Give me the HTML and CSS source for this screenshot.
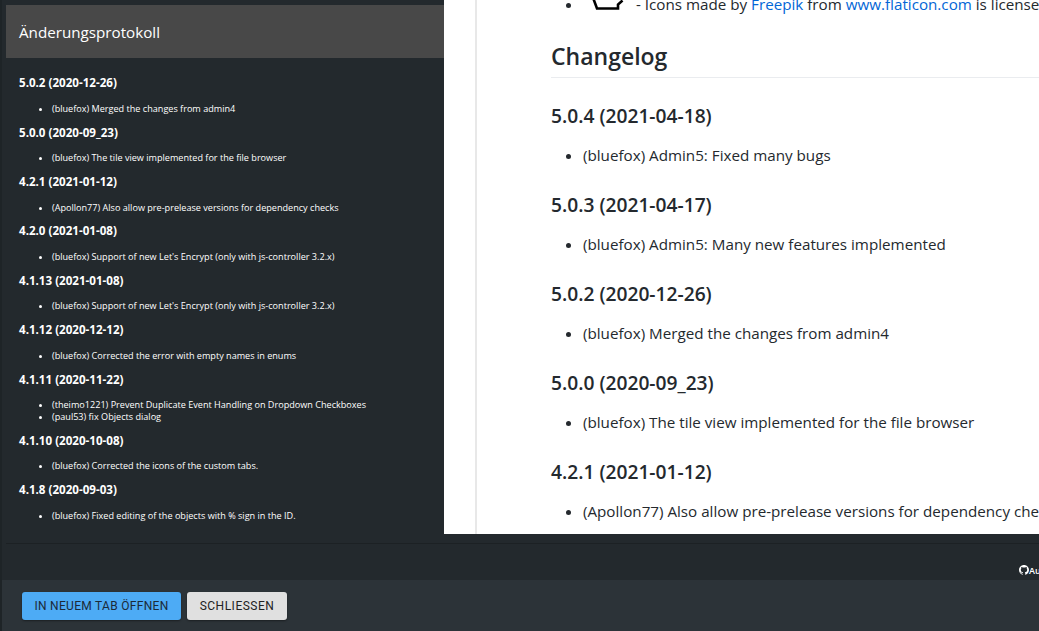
FILE: index.html
```html
<!DOCTYPE html>
<html lang="de">
<head>
<meta charset="utf-8">
<title>Änderungsprotokoll</title>
<link rel="stylesheet" href="styles.css">
</head>
<body>
<div class="dialog">
  <div class="content">
    <div class="columns">
      <section class="news">
        <h2 class="news-title">Änderungsprotokoll</h2>
        <div class="news-body">
          <h3>5.0.2 (2020-12-26)</h3>
          <ul><li>(bluefox) Merged the changes from admin4</li></ul>
          <h3>5.0.0 (2020-09_23)</h3>
          <ul><li>(bluefox) The tile view implemented for the file browser</li></ul>
          <h3>4.2.1 (2021-01-12)</h3>
          <ul><li>(Apollon77) Also allow pre-prelease versions for dependency checks</li></ul>
          <h3>4.2.0 (2021-01-08)</h3>
          <ul><li>(bluefox) Support of new Let's Encrypt (only with js-controller 3.2.x)</li></ul>
          <h3>4.1.13 (2021-01-08)</h3>
          <ul><li>(bluefox) Support of new Let's Encrypt (only with js-controller 3.2.x)</li></ul>
          <h3>4.1.12 (2020-12-12)</h3>
          <ul><li>(bluefox) Corrected the error with empty names in enums</li></ul>
          <h3>4.1.11 (2020-11-22)</h3>
          <ul><li>(theimo1221) Prevent Duplicate Event Handling on Dropdown Checkboxes</li><li>(paul53) fix Objects dialog</li></ul>
          <h3>4.1.10 (2020-10-08)</h3>
          <ul><li>(bluefox) Corrected the icons of the custom tabs.</li></ul>
          <h3>4.1.8 (2020-09-03)</h3>
          <ul><li>(bluefox) Fixed editing of the objects with % sign in the ID.</li></ul>
        </div>
      </section>
      <section class="readme">
        <div class="readme-inner">
          <ul class="credits">
            <li>
              <svg class="credit-icon" width="32" height="12" viewBox="0 0 32 12" aria-hidden="true"><path d="M1.500 0L5 9.500H26V5.500L30.500 1.500" fill="none" stroke="#000" stroke-width="2.600"/></svg><span>- Icons made by <a href="#">Freepik</a> from <a href="#">www.flaticon.com</a> is licensed by CC 3.0 BY</span>
            </li>
          </ul>
          <h2 class="md-title">Changelog</h2>
          <h3>5.0.4 (2021-04-18)</h3>
          <ul><li>(bluefox) Admin5: Fixed many bugs</li></ul>
          <h3>5.0.3 (2021-04-17)</h3>
          <ul><li>(bluefox) Admin5: Many new features implemented</li></ul>
          <h3>5.0.2 (2020-12-26)</h3>
          <ul><li>(bluefox) Merged the changes from admin4</li></ul>
          <h3>5.0.0 (2020-09_23)</h3>
          <ul><li>(bluefox) The tile view implemented for the file browser</li></ul>
          <h3>4.2.1 (2021-01-12)</h3>
          <ul><li>(Apollon77) Also allow pre-prelease versions for dependency checks</li></ul>
        </div>
      </section>
    </div>
    <div class="meta">
      <span class="author"><svg width="10" height="10" viewBox="0 0 16 16" aria-hidden="true"><path fill="#fff" d="M8 0C3.600 0 0 3.600 0 8c0 3.500 2.300 6.500 5.500 7.600.4.100.5-.2.5-.4v-1.400c-2.200.5-2.700-1-2.700-1-.4-.9-.9-1.200-.9-1.200-.7-.5.100-.5.100-.5.800.100 1.200.8 1.200.8.700 1.200 1.900.9 2.300.7.100-.5.300-.9.500-1.100-1.800-.2-3.600-.9-3.600-4 0-.9.300-1.600.8-2.100-.1-.2-.4-1 .1-2.100 0 0 .7-.2 2.200.8.600-.2 1.300-.3 2-.3s1.400.1 2 .3c1.500-1 2.200-.8 2.200-.8.400 1.100.2 1.900.1 2.100.5.600.8 1.300.8 2.100 0 3.100-1.900 3.700-3.700 3.900.3.300.6.800.6 1.500v2.200c0 .2.100.5.600.4C13.700 14.500 16 11.500 16 8c0-4.400-3.600-8-8-8z"/></svg><span>Autor</span></span>
    </div>
  </div>
  <footer class="actions">
    <button class="btn btn-primary" type="button">In neuem Tab öffnen</button>
    <button class="btn btn-default" type="button">Schliessen</button>
  </footer>
</div>
</body>
</html>
```

FILE: styles.css
```css
* { box-sizing: border-box; }
html, body { margin: 0; height: 100%; overflow: hidden; }
body { background: #23292d; font-family: "Open Sans", "Noto Sans", sans-serif; }
.dialog { width: 1039px; height: 631px; display: flex; flex-direction: column; padding-left: 2px; background: #1e2427; }
.content { height: 580px; background: #23292d; display: flex; flex-direction: column; overflow: hidden; flex: none; }
.columns { height: 544px; display: flex; margin-left: 4px; border-bottom: 1px solid #1c2124; flex: none; }
.news { width: 438px; flex: none; padding-top: 5px; color: #fff; }
.news-title { margin: 0; height: 53px; padding: 0 0 0 13px; display: flex; align-items: center; font-size: 15.200px; font-weight: 400; background: #484848; color: #fff; }
.news-body { padding: 13.300px 0 0 13px; }
.news-body h3 { margin: 0; height: 24.700px; line-height: 24.700px; font-size: 11.600px; font-weight: 700; }
.news-body ul { margin: 0; padding: 6.850px 0 5.850px 33px; font-size: 9.100px; line-height: 12px; }
.news-body ul li { height: 12px; white-space: nowrap; }
.readme { flex: 1; min-width: 0; height: 534px; background: #fff; overflow: hidden; color: #24292e; }
.readme-inner { display: flow-root; margin-left: 31px; border-left: 2px solid #e8e8e8; height: 100%; padding-left: 74px; width: 800px; font-size: 15.200px; line-height: 24px; }
.readme ul { margin: 0; padding-left: 32px; }
.readme li { white-space: nowrap; height: 24px; }
.readme .credits { margin-top: -8px; }
.credit-icon { margin: 0 12px 0 9px; vertical-align: -1px; }
.credits a { color: #0366d6; text-decoration: none; }
.md-title { margin: 25px 0 0; height: 37px; border-bottom: 1px solid #eaecef; font-size: 23px; font-weight: 600; line-height: 30px; }
.readme h3 { margin: 25px 0 15px; font-size: 19.200px; font-weight: 600; line-height: 25px; }
.meta { flex: 1; display: flex; justify-content: flex-end; padding: 21px 0 0; }
.author { display: flex; align-items: center; width: 20px; height: 10px; overflow: hidden; flex: none; color: #fff; font-size: 9px; font-weight: 600; }
.author svg { flex: none; }
.actions { height: 51px; flex: none; background: #2c3338; display: flex; align-items: flex-start; gap: 6px; padding: 12px 0 0 20px; }
.btn { height: 28px; border: 0; border-radius: 3px; font-family: Roboto, sans-serif; font-size: 12px; font-weight: 400; letter-spacing: .3px; text-transform: uppercase; white-space: nowrap; color: #1c2a38; box-shadow: 0 1px 2px rgba(0,0,0,.4); padding: 0; }
.btn-primary { width: 159px; background: #4dabf5; }
.btn-default { width: 100px; background: #e0e0e0; color: #222; letter-spacing: .5px; }
```
